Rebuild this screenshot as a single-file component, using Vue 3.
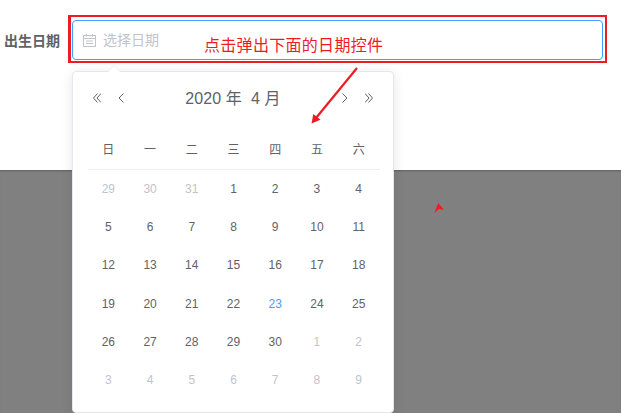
<template>
  <div class="page">

    <!-- FORM -->
    <div class="top">
      <div class="form-row">
        <label class="label">出生日期</label>
        <div class="input-box">
          <svg class="cal-icon" width="13" height="13" viewBox="0 0 13 13" fill="none" stroke="#c0c4cc" stroke-width="1">
            <rect x="0.5" y="1.500" width="12" height="11" />
            <path d="M0.500 4.500h12M3.500 0v2.500M9.500 0v2.500M3 7h7M3 9.500h7" />
          </svg>
          <span class="placeholder">选择日期</span>
        </div>
      </div>
    </div>
    <div class="gray"></div>

    <!-- DATE PICKER -->
    <div class="picker">
      <div class="picker-arrow"></div>
      <div class="picker-head">
        <div class="nav">
          <svg width="8" height="10" viewBox="0 0 8 10" class="nav-icon"><path d="M4.500 .5L.5 5l4 4.500M8 .5L4 5l4 4.500" /></svg>
          <svg width="6" height="10" viewBox="0 0 6 10" class="nav-icon nav-gap"><path d="M5.500 .5L1 5l4.500 4.500" /></svg>
        </div>
        <div class="title">2020 年&nbsp;&nbsp;4 月</div>
        <div class="nav">
          <svg width="6" height="10" viewBox="0 0 6 10" class="nav-icon"><path d="M.5 .5L5 5 .5 9.500" /></svg>
          <svg width="8" height="10" viewBox="0 0 8 10" class="nav-icon nav-gap"><path d="M0 .5l4 4.500-4 4.500M3.500 .5l4 4.500-4 4.500" /></svg>
        </div>
      </div>

      <div class="week">
        <span v-for="w in weeks" :key="w">{{ w }}</span>
      </div>

      <div class="days">
        <span
          v-for="(d,index) in days"
          :key="index"
          class="day"
          :class="{ other: d.other, today: d.today }"
        >{{ d.n }}</span>
      </div>
    </div>

    <!-- ANNOTATIONS -->
    <div class="red-frame"></div>
    <div class="red-text">点击弹出下面的日期控件</div>
    <svg class="marks" width="621" height="413" viewBox="0 0 621 413">
      <line x1="357" y1="68" x2="316" y2="118" stroke="#ed1c24" stroke-width="2.200" />
      <path d="M311.500 123.500l1.800-9.500 7.200 5.800z" fill="#ed1c24" />
      <path d="M434.300 213l4-10 5.700 6.700-5-.7z" fill="#ed1c24" />
    </svg>

  </div>
</template>

<script setup>
const weeks = ['日','一','二','三','四','五','六']

const days = []
for (const n of [29,30,31]) days.push({ n, other:true })
for (let n=1;n<=30;n++) days.push({ n, today:n===23 })
for (let n=1;n<=9;n++) days.push({ n, other:true })
</script>

<style>
body{
  margin:0;
}
</style>

<style scoped>
.page{
  position:relative;
  width:621px;
  height:413px;
  overflow:hidden;
  font-family:"Liberation Sans","Noto Sans CJK SC",sans-serif;
  background:#fff;
}

.top{
  height:170px;
  box-sizing:border-box;
  padding:20px 18px 0 0;
}

.form-row{
  display:flex;
  align-items:center;
}

.label{
  width:60px;
  margin-right:12px;
  text-align:right;
  font-size:14px;
  font-weight:bold;
  color:#606266;
  padding-bottom:1px;
}

.input-box{
  flex:1;
  height:40px;
  box-sizing:border-box;
  border:1px solid #409eff;
  border-radius:4px;
  display:flex;
  align-items:center;
  padding:0 0 0 10px;
}

.cal-icon{
  margin-right:7px;
}

.placeholder{
  font-size:14px;
  color:#c0c4cc;
  padding-bottom:3px;
}

.gray{
  height:243px;
  background:#808080;
  box-shadow:inset 0 2px 2px -1px rgba(0,0,0,.25);
}

.picker{
  position:absolute;
  left:72px;
  top:71px;
  width:322px;
  height:342px;
  box-sizing:border-box;
  padding:12px 12px 0 15px;
  background:#fff;
  border:1px solid #e4e7ed;
  border-radius:4px;
  box-shadow:0 2px 12px rgba(0,0,0,.1);
  color:#606266;
}

.picker-arrow{
  position:absolute;
  left:35px;
  top:-6px;
  width:0;
  height:0;
  border-left:6px solid transparent;
  border-right:6px solid transparent;
  border-bottom:6px solid #fff;
  filter:drop-shadow(0 -1px 0 #ebeef5);
}

.picker-head{
  height:28px;
  display:flex;
  align-items:center;
  justify-content:space-between;
  padding:0 8px 0 5px;
}

.nav{
  display:flex;
  align-items:center;
}

.nav-icon{
  fill:none;
  stroke:#606266;
  stroke-width:1;
}

.nav-gap{
  margin-left:17px;
}

.title{
  font-size:16px;
  line-height:28px;
  margin-top:2px;
  letter-spacing:.1px;
}

.week{
  display:grid;
  grid-template-columns:repeat(7,1fr);
  height:43px;
  margin-top:15px;
  margin-right:1px;
  border-bottom:1px solid #ebeef5;
  box-sizing:border-box;
  font-size:12px;
  line-height:36px;
  text-align:center;
  padding-top:5px;
}

.week span{
  padding-right:1px;
}

.days{
  display:grid;
  grid-template-columns:repeat(7,1fr);
  grid-auto-rows:38.2px;
  margin-right:1px;
  font-size:12px;
  text-align:center;
}

.day{
  line-height:39px;
  padding-right:1px;
}

.other{
  color:#c0c4cc;
}

.today{
  color:#409eff;
}

.red-frame{
  position:absolute;
  left:68px;
  top:15px;
  width:539px;
  height:48px;
  box-sizing:border-box;
  border:2px solid #ed1c24;
  border-left-width:3px;
}

.red-text{
  position:absolute;
  left:204px;
  top:35px;
  font-size:16px;
  line-height:22px;
  letter-spacing:.3px;
  color:#ed1c24;
}

.marks{
  position:absolute;
  left:0;
  top:0;
  pointer-events:none;
}
</style>
